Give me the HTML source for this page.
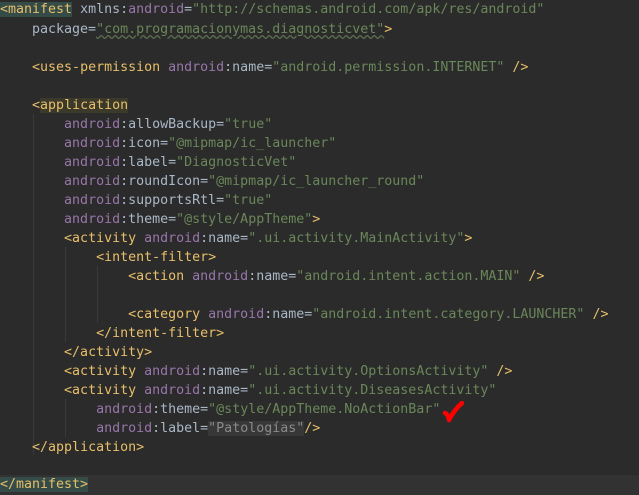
<!DOCTYPE html>
<html><head><meta charset="utf-8"><style>
html,body{margin:0;padding:0;background:#2b2b2b;width:639px;height:495px;overflow:hidden}
#c{position:relative;width:639px;height:495px;font-family:"DejaVu Sans Mono","Liberation Mono",monospace;font-size:13.3px;color:#a9b7c6}
.l{position:absolute;left:0;height:19px;line-height:19px;white-space:pre;margin-top:1px}
.t{color:#e8bf6a}.a{color:#9876aa}.s{color:#6a8759}.n{color:#bababa}
.g{position:absolute;width:1px;background:#3a3a3a}
</style></head><body><div id="c">
<div style="position:absolute;left:0;top:475px;width:639px;height:20px;background:#323232"></div>
<div class="g" style="left:33px;top:114px;height:341px"></div>
<div class="g" style="left:65px;top:247px;height:95px"></div>
<div class="g" style="left:65px;top:399px;height:38px"></div>
<div class="g" style="left:97px;top:266px;height:57px"></div>
<div class="l" style="top:0;margin-top:0"><span class="t" style="background:#344b47">&lt;manifest</span> xmlns:<span class="a">android</span>=<span class="s">"http://schemas.android.com/apk/res/android"</span></div>
<div class="l" style="top:19px">    package=<span class="s" style="text-decoration:underline wavy #5c6e4f">"com.programacionymas.diagnosticvet"</span><span class="t">&gt;</span></div>
<div class="l" style="top:57px">    <span class="t">&lt;uses-permission </span><span class="a">android</span>:name=<span class="s">"android.permission.INTERNET"</span> <span class="t">/&gt;</span></div>
<div class="l" style="top:95px">    <span class="t">&lt;<span style="background:#3b3a2a">application</span></span></div>
<div class="l" style="top:114px">        <span class="a">android</span>:allowBackup=<span class="s">"true"</span></div>
<div class="l" style="top:133px">        <span class="a">android</span>:icon=<span class="s">"@mipmap/ic_launcher"</span></div>
<div class="l" style="top:152px">        <span class="a">android</span>:label=<span class="s">"DiagnosticVet"</span></div>
<div class="l" style="top:171px">        <span class="a">android</span>:roundIcon=<span class="s">"@mipmap/ic_launcher_round"</span></div>
<div class="l" style="top:190px">        <span class="a">android</span>:supportsRtl=<span class="s">"true"</span></div>
<div class="l" style="top:209px">        <span class="a">android</span>:theme=<span class="s">"@style/AppTheme"</span><span class="t">&gt;</span></div>
<div class="l" style="top:228px">        <span class="t">&lt;activity </span><span class="a">android</span>:name=<span class="s">".ui.activity.MainActivity"</span><span class="t">&gt;</span></div>
<div class="l" style="top:247px">            <span class="t">&lt;intent-filter&gt;</span></div>
<div class="l" style="top:266px">                <span class="t">&lt;action </span><span class="a">android</span>:name=<span class="s">"android.intent.action.MAIN"</span> <span class="t">/&gt;</span></div>
<div class="l" style="top:304px">                <span class="t">&lt;category </span><span class="a">android</span>:name=<span class="s">"android.intent.category.LAUNCHER"</span> <span class="t">/&gt;</span></div>
<div class="l" style="top:323px">            <span class="t">&lt;/intent-filter&gt;</span></div>
<div class="l" style="top:342px">        <span class="t">&lt;/activity&gt;</span></div>
<div class="l" style="top:361px">        <span class="t">&lt;activity </span><span class="a">android</span>:name=<span class="s">".ui.activity.OptionsActivity"</span> <span class="t">/&gt;</span></div>
<div class="l" style="top:380px">        <span class="t">&lt;activity </span><span class="a">android</span>:name=<span class="s">".ui.activity.DiseasesActivity"</span></div>
<div class="l" style="top:399px">            <span class="a">android</span>:theme=<span class="s">"@style/AppTheme.NoActionBar"</span></div>
<div class="l" style="top:418px">            <span class="a">android</span>:label=<span style="color:#8a8a8a;background:#383838">"Patologías"</span><span class="t">/&gt;</span></div>
<div class="l" style="top:437px">    <span class="t">&lt;/application&gt;</span></div>
<div class="l" style="top:475px;margin-top:0"><span class="t" style="background:#344b47">&lt;/manifest&gt;</span></div>
<svg style="position:absolute;left:442px;top:401px" width="24" height="22" viewBox="0 0 24 22"><path d="M3 12 Q6 13 7 19 Q12 9 20 2" fill="none" stroke="#ff0000" stroke-width="4.5" stroke-linecap="round" stroke-linejoin="round"/></svg>
</div></body></html>
